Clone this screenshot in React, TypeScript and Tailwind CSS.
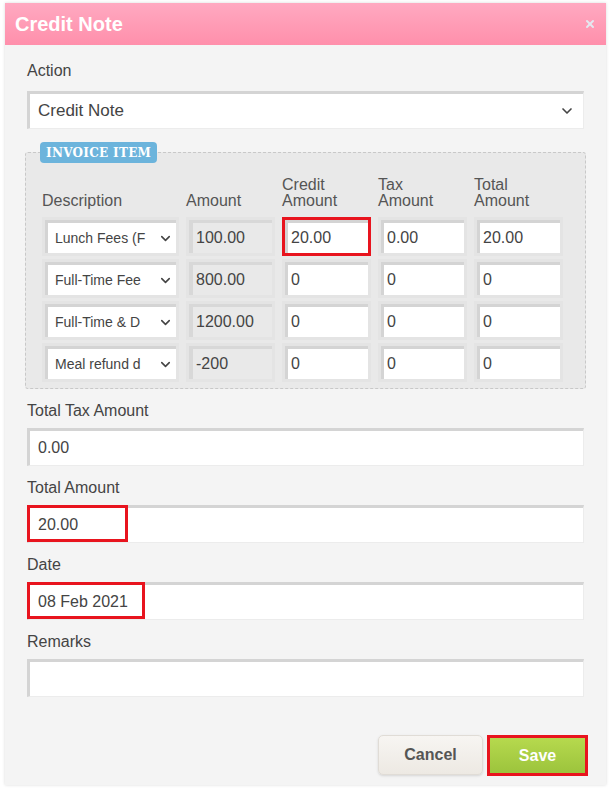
import { ChevronDown, X } from "lucide-react";

const inputCls =
  "h-[38px] bg-white border-t-[3px] border-l-[3px] border-r border-b border-t-[#d4d4d4] border-l-[#d4d4d4] border-r-[#ececec] border-b-[#ececec] px-2 flex items-center text-[16px] text-[#444]";

const rows = [
  { desc: "Lunch Fees (F", amt: "100.00", credit: "20.00", tax: "0.00", total: "20.00" },
  { desc: "Full-Time Fee", amt: "800.00", credit: "0", tax: "0", total: "0" },
  { desc: "Full-Time & D", amt: "1200.00", credit: "0", tax: "0", total: "0" },
  { desc: "Meal refund d", amt: "-200", credit: "0", tax: "0", total: "0" },
];

function Cell({ children, gray, red, w }: { children?: React.ReactNode; gray?: boolean; red?: boolean; w: string }) {
  return (
    <div className={`${w} h-[39px] p-[3px] bg-[#e4e4e4]`}>
      <div
        className={`h-full flex items-center px-[3px] text-[16px] text-[#444] ${
          gray ? "bg-[#e9e9e9] border-l-[4px] border-t-[3px] border-[#d8d8d8]" : "bg-white border-l-[3px] border-t-[3px] border-[#d4d4d4]"
        } ${red ? "outline-[3px] outline outline-[#e8141e]" : ""}`}
      >
        {children}
      </div>
    </div>
  );
}

export default function App() {
  return (
    <div className="w-[612px] h-[788px] bg-white pt-[3px] px-[5px]" style={{ fontFamily: '"Liberation Sans", Arial, sans-serif' }}>
      <div className="w-[601px] h-[782px] bg-[#f4f4f4] shadow-[0_0_3px_rgba(0,0,0,0.15)] flex flex-col">
        <div className="h-[42px] shrink-0 bg-gradient-to-b from-[#ffa9c1] to-[#ff8fab] flex items-center justify-between px-[10px]">
          <span className="text-white font-bold text-[20px]">Credit Note</span>
          <X className="w-[12px] h-[12px] text-[#e4e8f0]" strokeWidth={4} />
        </div>
        <div className="px-[22px] pt-[14px] flex flex-col">
          <div className="text-[16px] text-[#444] mb-[8px]">Action</div>
          <div className={`${inputCls} justify-between`}>
            <span className="text-[17px]">Credit Note</span>
            <ChevronDown className="w-[16px] h-[16px]" strokeWidth={2.5} />
          </div>
          <div className="relative mt-[23px] mx-[-2px] border border-dashed border-[#c8c8c8] bg-[#e9e9e9] rounded-[3px] pt-[24px] pb-[6px] pl-[16px]">
            <div className="absolute left-[14px] top-[-11px] bg-[#6cb4dc] text-white font-bold text-[12px] tracking-wide px-[6px] h-[21px] flex items-center rounded-[4px]" style={{ fontFamily: '"DejaVu Serif", serif' }}>
              INVOICE ITEM
            </div>
            <div className="flex text-[16px] text-[#555] leading-[16px] h-[40px] items-end pb-[8px]">
              <div className="w-[144px] pb-[-4px]">Description</div>
              <div className="w-[96px]">Amount</div>
              <div className="w-[96px]">Credit<br />Amount</div>
              <div className="w-[96px]">Tax<br />Amount</div>
              <div className="w-[96px]">Total<br />Amount</div>
            </div>
            <div className="flex flex-col gap-[3px]">
              {rows.map((r, i) => (
                <div key={i} className="flex gap-[7px]">
                  <Cell w="w-[137px]">
                    <span className="flex-1 text-[14px] pl-[4px] overflow-hidden whitespace-nowrap">{r.desc}</span>
                    <ChevronDown className="w-[15px] h-[15px] shrink-0" strokeWidth={2.5} />
                  </Cell>
                  <Cell w="w-[89px]" gray>{r.amt}</Cell>
                  <Cell w="w-[89px]" red={i === 0}>{r.credit}</Cell>
                  <Cell w="w-[89px]">{r.tax}</Cell>
                  <Cell w="w-[89px]">{r.total}</Cell>
                </div>
              ))}
            </div>
          </div>
          {[
            { label: "Total Tax Amount", val: "0.00", red: "" },
            { label: "Total Amount", val: "20.00", red: "w-[101px]" },
            { label: "Date", val: "08 Feb 2021", red: "w-[118px]" },
            { label: "Remarks", val: "", red: "" },
          ].map((f) => (
            <div key={f.label} className="flex flex-col">
              <div className="text-[16px] text-[#444] mt-[10px] mb-[5px]">{f.label}</div>
              <div className={`${inputCls} relative`}>
                {f.val}
                {f.red && <div className={`absolute left-[-3px] top-[-3px] h-[37px] ${f.red} border-[3px] border-[#e8141e]`} />}
              </div>
            </div>
          ))}
          <div className="flex justify-end gap-[4px] mt-[38px] mr-[-4px]">
            <button className="w-[105px] h-[40px] rounded-[5px] bg-gradient-to-b from-[#f7f5f2] to-[#ede9e3] border border-[#e0dcd6] shadow-sm text-[#555] font-bold text-[16px]">
              Cancel
            </button>
            <div className="w-[101px] h-[41px] border-[3px] border-[#e8141e] p-0">
              <button className="w-full h-full bg-gradient-to-b from-[#b6d94e] to-[#9cc43c] text-white font-bold text-[16px]">
                Save
              </button>
            </div>
          </div>
        </div>
      </div>
    </div>
  );
}
